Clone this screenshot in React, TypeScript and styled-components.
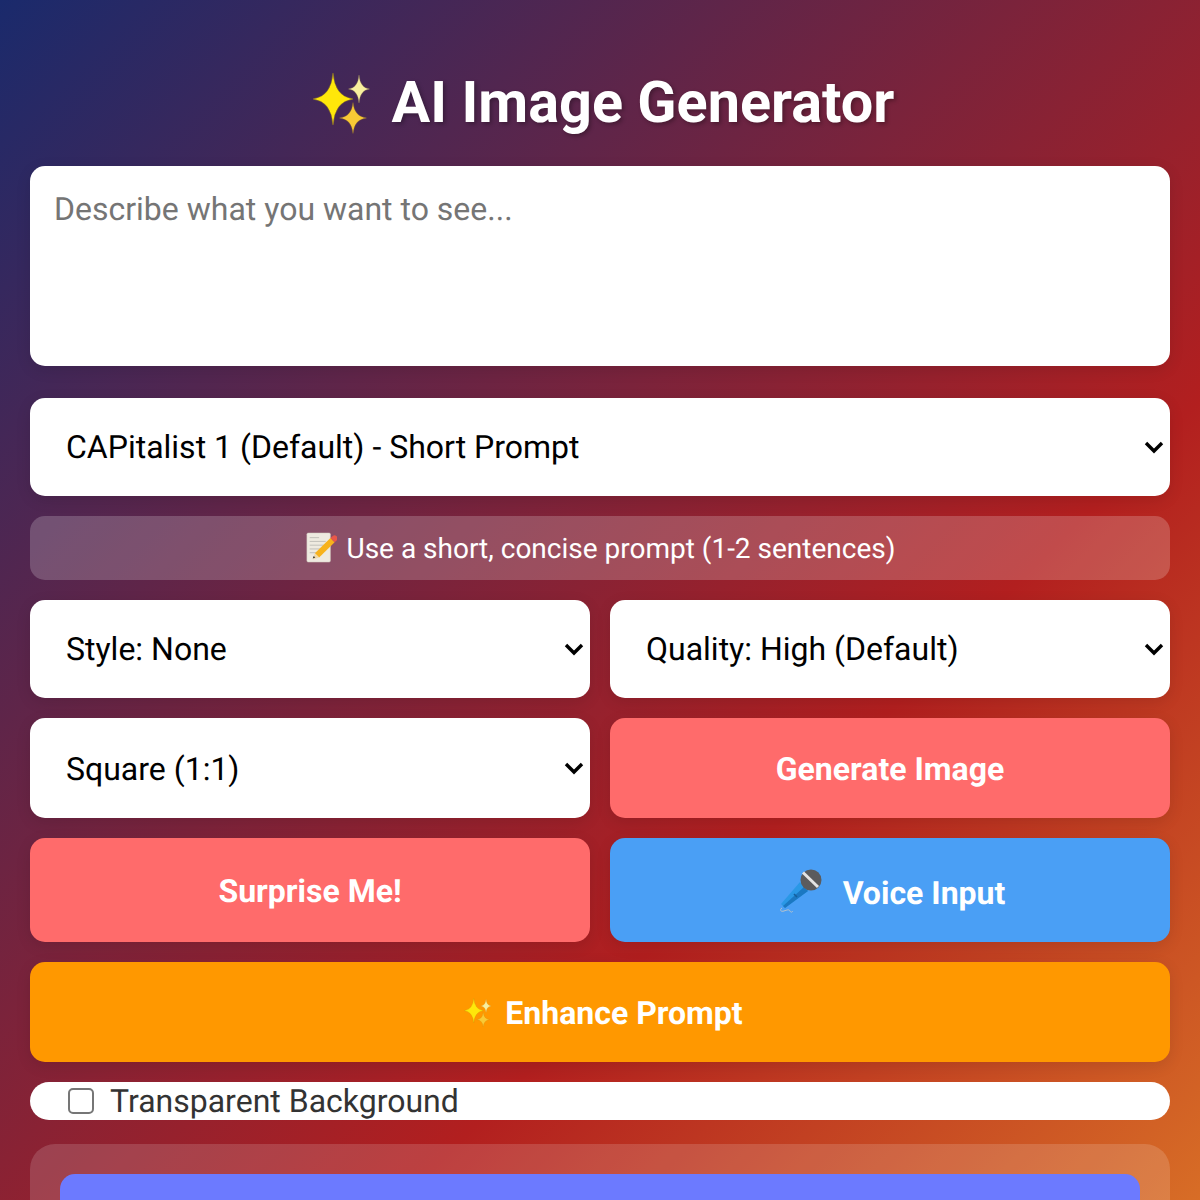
import React from "react";
import styled, { createGlobalStyle } from "styled-components";

const Global = createGlobalStyle`
  html, body { margin: 0; padding: 0; }
  body {
    font-family: Roboto, "Noto Sans", sans-serif;
    background: linear-gradient(135deg, #1a2a6c, #b21f1f, #fdbb2d);
    color: #fff;
  }
  * { box-sizing: border-box; text-rendering: geometricPrecision; }
`;

const Page = styled.div`
  zoom: 2;
  min-height: 1000px;
  padding: 15px;
  display: flex;
  flex-direction: column;
`;

const Title = styled.h1`
  margin: 0 0 11.5px;
  height: 56.5px;
  display: flex;
  align-items: flex-end;
  justify-content: center;
  gap: 7px;
  font-size: 28.8px;
  font-weight: 700;
  line-height: 36px;
  padding-bottom: 1.5px;
  text-shadow: 1px 1px 2px rgba(0, 0, 0, 0.3);
`;

const TitleSparkles = styled.svg`
  width: 36px;
  height: 36px;
  flex: none;
`;

const Prompt = styled.textarea`
  display: block;
  width: 100%;
  height: 100px;
  padding: 12px;
  border: none;
  border-radius: 7.5px;
  resize: none;
  font-family: inherit;
  font-size: 16px;
  line-height: 19px;
  margin-bottom: 16px;
  background: #fff;
  box-shadow: 0 2px 7.5px rgba(0, 0, 0, 0.1);
  &::placeholder { color: #757575; }
`;

const Stack = styled.div`
  display: flex;
  flex-direction: column;
  gap: 10px;
`;

const Row = styled.div`
  display: grid;
  grid-template-columns: 1fr 1fr;
  gap: 10px;
`;

const Select = styled.select<{ $h?: number }>`
  appearance: none;
  -webkit-appearance: none;
  width: 100%;
  height: ${(p) => p.$h ?? 49}px;
  padding: ${(p) => (p.$h ? "1px" : "0")} 20px 0 18px;
  border: none;
  border-radius: 7.5px;
  background-color: #fff;
  background-image: url("data:image/svg+xml,%3Csvg xmlns='http://www.w3.org/2000/svg' viewBox='0 0 20 14'%3E%3Cpath d='M2 3l8 8 8-8' fill='none' stroke='%23000' stroke-width='3.4'/%3E%3C/svg%3E");
  background-repeat: no-repeat;
  background-size: 10px 7px;
  background-position: right 3px center;
  color: #000;
  font-family: inherit;
  font-size: 16px;
  box-shadow: 0 2px 7.5px rgba(0, 0, 0, 0.1);
`;

const Hint = styled.div`
  height: 32px;
  border-radius: 7.5px;
  background: rgba(255, 255, 255, 0.2);
  display: flex;
  align-items: center;
  justify-content: center;
  font-size: 14px;
`;

const HintIcon = styled.svg`
  width: 16px;
  height: 16px;
  margin: 0 5px 0 0;
  flex: none;
`;

const Action = styled.button<{ $bg: string; $h: number; $top?: number }>`
  height: ${(p) => p.$h}px;
  width: 100%;
  padding: ${(p) => p.$top ?? 1}px 0 0;
  border: none;
  border-radius: 7.5px;
  background: ${(p) => p.$bg};
  color: #fff;
  font-family: inherit;
  font-size: 16px;
  font-weight: 700;
  display: flex;
  align-items: center;
  justify-content: center;
  box-shadow: 0 2px 7.5px rgba(0, 0, 0, 0.1);
`;

const MicIcon = styled.svg`
  width: 24px;
  height: 24px;
  margin: 0 10px 1px 0;
  flex: none;
`;

const SmallSparkles = styled.svg`
  width: 17px;
  height: 17px;
  margin: 0 5px 0 2px;
  flex: none;
`;

const CheckRow = styled.label`
  height: 19px;
  border-radius: 9.5px;
  background: #fff;
  display: flex;
  align-items: center;
  padding-left: 19px;
  gap: 8px;
  color: #333;
  font-size: 16px;
`;

const Check = styled.input`
  width: 13px;
  height: 13px;
  margin: 0;
`;

const Panel = styled.section`
  margin-top: 12px;
  padding: 15px;
  border-radius: 12.5px;
  background: rgba(255, 255, 255, 0.15);
`;

const PanelButton = styled.button`
  display: block;
  width: 100%;
  height: 50px;
  border: none;
  border-radius: 7.5px;
  background: #6c7aff;
`;

const star = (cx: number, cy: number, rx: number, ry: number) => {
  const kx = rx * 0.09;
  const ky = ry * 0.09;
  return `M${cx} ${cy - ry}Q${cx + kx} ${cy - ky} ${cx + rx} ${cy}Q${cx + kx} ${cy + ky} ${cx} ${cy + ry}Q${cx - kx} ${cy + ky} ${cx - rx} ${cy}Q${cx - kx} ${cy - ky} ${cx} ${cy - ry}Z`;
};

const SparkleShapes = () => (
  <>
    <path d={star(27, 31, 20, 26)} fill="#ffe70a" stroke="#a88f10" strokeWidth="0.4" />
    <path d={star(53, 21, 10.5, 14)} fill="#f8ef9e" stroke="#a89a50" strokeWidth="0.3" />
    <path d={star(47, 50, 13.5, 15.5)} fill="#f9c935" stroke="#a88420" strokeWidth="0.3" />
  </>
);

const Memo = () => (
  <>
    <rect x="2" y="1" width="25" height="31" rx="1.5" fill="#eeeae0" stroke="#cfcabd" strokeWidth="0.5" />
    <path d="M5 6h10M5 10h17M5 14h17M5 18h12M5 22h9" stroke="#a9a9a5" strokeWidth="0.7" />
    <path d="M27 6.5l4.5 4.5L15 27l-4.5-4.5z" fill="#f7b21c" />
    <path d="M27 6.5l2.2-2a3 3 0 0 1 4.4 4.4l-2.1 2.1z" fill="#e8584a" />
    <path d="M10.5 22.5L15 27l-6.8 2.2z" fill="#f0d9a8" />
    <path d="M9.3 25.6l1.6 1.6-2.7.9z" fill="#333" />
  </>
);

const Mic = () => (
  <>
    <path d="M25 14l8 9-23 17-4-4z" fill="#2a98e6" />
    <path d="M33 23L10 40l-2-2 21-19z" fill="#1b78c2" />
    <path d="M19 26l3 3" stroke="#155f9c" strokeWidth="1.6" />
    <circle cx="36" cy="12" r="10.500" fill="#5b5b5d" />
    <path d="M28 4.500l15 14.500" stroke="#e4e4e4" strokeWidth="3" />
    <path d="M7 40c-3 2-1 4 2 3s5-2 6 0 2 1 3 0" fill="none" stroke="#b9c4cc" strokeWidth="1" />
  </>
);

export default function App() {
  return (
    <Page>
      <Global />
      <Title>
        <TitleSparkles viewBox="0 0 72 72" role="img" aria-label="sparkles"><SparkleShapes /></TitleSparkles>
        AI Image Generator
      </Title>
      <Prompt placeholder="Describe what you want to see..." />
      <Stack>
        <Select defaultValue="a">
          <option value="a">CAPitalist 1 (Default) - Short Prompt</option>
        </Select>
        <Hint>
          <HintIcon viewBox="0 0 34 34" role="img" aria-label="memo"><Memo /></HintIcon>
          Use a short, concise prompt (1-2 sentences)
        </Hint>
        <Row>
          <Select><option>Style: None</option></Select>
          <Select><option>Quality: High (Default)</option></Select>
        </Row>
        <Row>
          <Select $h={50}><option>Square (1:1)</option></Select>
          <Action $bg="#ff6b6b" $h={50}>Generate Image</Action>
        </Row>
        <Row>
          <Action $bg="#ff6b6b" $h={52}>Surprise Me!</Action>
          <Action $bg="#4a9ff5" $h={52} $top={3}>
            <MicIcon viewBox="0 0 48 48" role="img" aria-label="microphone"><Mic /></MicIcon>
            Voice Input
          </Action>
        </Row>
        <Action $bg="#ff9800" $h={50}>
          <SmallSparkles viewBox="0 0 72 72" role="img" aria-label="sparkles"><SparkleShapes /></SmallSparkles>
          Enhance Prompt
        </Action>
        <CheckRow><Check type="checkbox" />Transparent Background</CheckRow>
      </Stack>
      <Panel>
        <PanelButton aria-label="Action" />
      </Panel>
    </Page>
  );
}
